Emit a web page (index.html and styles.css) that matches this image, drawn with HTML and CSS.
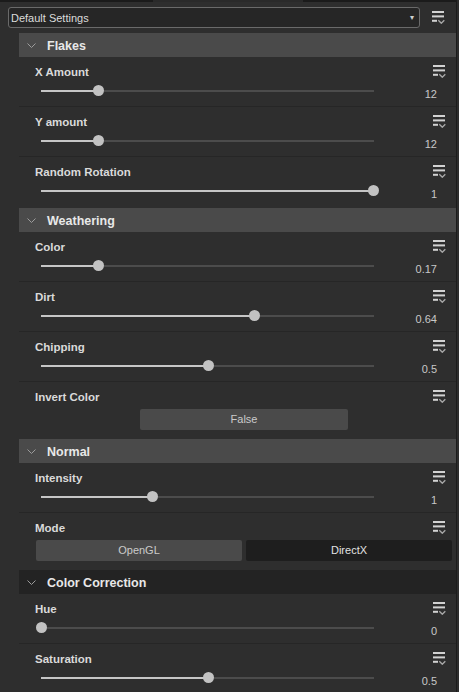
FILE: index.html
```html
<!DOCTYPE html>
<html>
<head>
<meta charset="utf-8">
<link rel="stylesheet" href="styles.css">
</head>
<body>
<div class="panel">
  <div class="topstrip"><span class="ts-dark"></span><span class="ts-mid"></span><span class="ts-dark"></span></div>
  <div class="topbar">
    <div class="dropdown"><span>Default Settings</span><span class="caret">&#9662;</span></div>
    <svg class="menu-icon" viewBox="0 0 13 13"><rect x="0" y="0" width="12" height="2"/><rect x="0" y="4.4" width="12" height="2"/><rect x="0" y="8.8" width="5" height="2"/><path class="chev" d="M6.3 9.3L9.3 12.2L12.3 9.3"/></svg>
  </div>

  <div class="section">
    <div class="header"><svg class="hchev" viewBox="0 0 9 5"><path d="M0.5 0.5L4.5 4.5L8.5 0.5"/></svg><span>Flakes</span></div>
    <div class="row">
      <div class="row-head"><span class="label">X Amount</span><svg class="menu-icon" viewBox="0 0 13 13"><rect x="0" y="0" width="12" height="2"/><rect x="0" y="4.4" width="12" height="2"/><rect x="0" y="8.8" width="5" height="2"/><path class="chev" d="M6.3 9.3L9.3 12.2L12.3 9.3"/></svg></div>
      <div class="row-body"><div class="slider" style="--p:17.1%"><div class="track"></div><div class="fill"></div><div class="thumb"></div></div><span class="value">12</span></div>
    </div>
    <div class="row">
      <div class="row-head"><span class="label">Y amount</span><svg class="menu-icon" viewBox="0 0 13 13"><rect x="0" y="0" width="12" height="2"/><rect x="0" y="4.4" width="12" height="2"/><rect x="0" y="8.8" width="5" height="2"/><path class="chev" d="M6.3 9.3L9.3 12.2L12.3 9.3"/></svg></div>
      <div class="row-body"><div class="slider" style="--p:17.1%"><div class="track"></div><div class="fill"></div><div class="thumb"></div></div><span class="value">12</span></div>
    </div>
    <div class="row">
      <div class="row-head"><span class="label">Random Rotation</span><svg class="menu-icon" viewBox="0 0 13 13"><rect x="0" y="0" width="12" height="2"/><rect x="0" y="4.4" width="12" height="2"/><rect x="0" y="8.8" width="5" height="2"/><path class="chev" d="M6.3 9.3L9.3 12.2L12.3 9.3"/></svg></div>
      <div class="row-body"><div class="slider" style="--p:99.7%"><div class="track"></div><div class="fill"></div><div class="thumb"></div></div><span class="value">1</span></div>
    </div>
  </div>

  <div class="section">
    <div class="header"><svg class="hchev" viewBox="0 0 9 5"><path d="M0.5 0.5L4.5 4.5L8.5 0.5"/></svg><span>Weathering</span></div>
    <div class="row">
      <div class="row-head"><span class="label">Color</span><svg class="menu-icon" viewBox="0 0 13 13"><rect x="0" y="0" width="12" height="2"/><rect x="0" y="4.4" width="12" height="2"/><rect x="0" y="8.8" width="5" height="2"/><path class="chev" d="M6.3 9.3L9.3 12.2L12.3 9.3"/></svg></div>
      <div class="row-body"><div class="slider" style="--p:17%"><div class="track"></div><div class="fill"></div><div class="thumb"></div></div><span class="value">0.17</span></div>
    </div>
    <div class="row">
      <div class="row-head"><span class="label">Dirt</span><svg class="menu-icon" viewBox="0 0 13 13"><rect x="0" y="0" width="12" height="2"/><rect x="0" y="4.4" width="12" height="2"/><rect x="0" y="8.8" width="5" height="2"/><path class="chev" d="M6.3 9.3L9.3 12.2L12.3 9.3"/></svg></div>
      <div class="row-body"><div class="slider" style="--p:64%"><div class="track"></div><div class="fill"></div><div class="thumb"></div></div><span class="value">0.64</span></div>
    </div>
    <div class="row">
      <div class="row-head"><span class="label">Chipping</span><svg class="menu-icon" viewBox="0 0 13 13"><rect x="0" y="0" width="12" height="2"/><rect x="0" y="4.4" width="12" height="2"/><rect x="0" y="8.8" width="5" height="2"/><path class="chev" d="M6.3 9.3L9.3 12.2L12.3 9.3"/></svg></div>
      <div class="row-body"><div class="slider" style="--p:50%"><div class="track"></div><div class="fill"></div><div class="thumb"></div></div><span class="value">0.5</span></div>
    </div>
    <div class="row row-tall">
      <div class="row-head"><span class="label">Invert Color</span><svg class="menu-icon" viewBox="0 0 13 13"><rect x="0" y="0" width="12" height="2"/><rect x="0" y="4.4" width="12" height="2"/><rect x="0" y="8.8" width="5" height="2"/><path class="chev" d="M6.3 9.3L9.3 12.2L12.3 9.3"/></svg></div>
      <div class="btn-body single"><div class="btn">False</div></div>
    </div>
  </div>

  <div class="section">
    <div class="header"><svg class="hchev" viewBox="0 0 9 5"><path d="M0.5 0.5L4.5 4.5L8.5 0.5"/></svg><span>Normal</span></div>
    <div class="row">
      <div class="row-head"><span class="label">Intensity</span><svg class="menu-icon" viewBox="0 0 13 13"><rect x="0" y="0" width="12" height="2"/><rect x="0" y="4.4" width="12" height="2"/><rect x="0" y="8.8" width="5" height="2"/><path class="chev" d="M6.3 9.3L9.3 12.2L12.3 9.3"/></svg></div>
      <div class="row-body"><div class="slider" style="--p:33.3%"><div class="track"></div><div class="fill"></div><div class="thumb"></div></div><span class="value">1</span></div>
    </div>
    <div class="row row-tall">
      <div class="row-head"><span class="label">Mode</span><svg class="menu-icon" viewBox="0 0 13 13"><rect x="0" y="0" width="12" height="2"/><rect x="0" y="4.4" width="12" height="2"/><rect x="0" y="8.8" width="5" height="2"/><path class="chev" d="M6.3 9.3L9.3 12.2L12.3 9.3"/></svg></div>
      <div class="btn-body pair"><div class="btn">OpenGL</div><div class="btn btn-active">DirectX</div></div>
    </div>
  </div>

  <div class="section">
    <div class="header header-dark"><svg class="hchev" viewBox="0 0 9 5"><path d="M0.5 0.5L4.5 4.5L8.5 0.5"/></svg><span>Color Correction</span></div>
    <div class="row">
      <div class="row-head"><span class="label">Hue</span><svg class="menu-icon" viewBox="0 0 13 13"><rect x="0" y="0" width="12" height="2"/><rect x="0" y="4.4" width="12" height="2"/><rect x="0" y="8.8" width="5" height="2"/><path class="chev" d="M6.3 9.3L9.3 12.2L12.3 9.3"/></svg></div>
      <div class="row-body"><div class="slider" style="--p:0%"><div class="track"></div><div class="fill"></div><div class="thumb"></div></div><span class="value">0</span></div>
    </div>
    <div class="row">
      <div class="row-head"><span class="label">Saturation</span><svg class="menu-icon" viewBox="0 0 13 13"><rect x="0" y="0" width="12" height="2"/><rect x="0" y="4.4" width="12" height="2"/><rect x="0" y="8.8" width="5" height="2"/><path class="chev" d="M6.3 9.3L9.3 12.2L12.3 9.3"/></svg></div>
      <div class="row-body"><div class="slider" style="--p:50%"><div class="track"></div><div class="fill"></div><div class="thumb"></div></div><span class="value">0.5</span></div>
    </div>
  </div>
</div>
</body>
</html>
```

FILE: styles.css
```css
html, body {
  margin: 0;
  padding: 0;
  background: #2d2d2d;
  height: 100%;
  overflow: hidden;
}
body {
  font-family: "Liberation Sans", Arial, sans-serif;
  color: #d8d8d8;
}
.panel {
  width: 456px;
  min-height: 692px;
  border-right: 1px solid #1c1c1c;
  background: #2e2e2e;
}
.topstrip {
  display: flex;
  height: 2px;
}
.ts-dark {
  flex: 0 0 153px;
  background: #1b1b1b;
}
.ts-mid {
  flex: 1;
  background: #2a2a2a;
}
.topbar {
  height: 30px;
  display: flex;
  align-items: flex-start;
}
.dropdown {
  margin: 5px 0 0 8px;
  width: 412px;
  height: 21px;
  box-sizing: border-box;
  border: 1px solid #6a6a6a;
  border-radius: 3px;
  background: #262626;
  display: flex;
  align-items: center;
  justify-content: space-between;
  padding: 0 5px 0 2px;
  font-size: 11px;
  color: #dcdcdc;
}
.caret {
  font-size: 8px;
  color: #cfcfcf;
}
.menu-icon {
  width: 13px;
  height: 13px;
  fill: #d2d2d2;
  flex: 0 0 auto;
}
.menu-icon .chev {
  fill: none;
  stroke: #a8a8a8;
  stroke-width: 1.4;
}
.topbar .menu-icon {
  margin: 9px 0 0 12px;
}
.section {
  margin: 1px 0 0 19px;
}
.header {
  height: 24px;
  background: #4a4a4a;
  display: flex;
  align-items: center;
  padding-left: 8px;
  padding-top: 1px;
  box-sizing: border-box;
  font-size: 12.5px;
  font-weight: bold;
  color: #e8e8e8;
}
.header-dark {
  background: #232323;
}
.hchev {
  width: 9px;
  height: 5px;
  margin-right: 11px;
  fill: none;
  stroke: #9c9c9c;
  stroke-width: 1;
}
.row {
  height: 50px;
  box-sizing: border-box;
  border-bottom: 1px solid #262626;
  padding-left: 16px;
}
.row:last-child {
  border-bottom: none;
}
.row-tall {
  height: 56px;
}
.row-head {
  display: flex;
  align-items: center;
  justify-content: space-between;
  height: 15px;
  padding-top: 7px;
  padding-right: 10px;
}
.label {
  font-size: 11.5px;
  font-weight: bold;
  color: #dadada;
}
.row-body {
  display: flex;
  align-items: center;
  height: 12px;
  margin-top: 6px;
}
.slider {
  position: relative;
  margin-left: 6px;
  width: 333px;
  height: 12px;
}
.track, .fill {
  position: absolute;
  left: 0;
  top: 5px;
  height: 2px;
}
.track {
  right: 0;
  background: #4c4c4c;
}
.fill {
  width: var(--p);
  background: #c6c6c6;
}
.thumb {
  position: absolute;
  top: 0;
  left: var(--p);
  width: 11px;
  height: 11px;
  margin-left: -5px;
  border-radius: 50%;
  background: #c2c2c2;
}
.value {
  margin-left: auto;
  padding-right: 19px;
  padding-top: 5px;
  font-size: 11px;
  color: #c8c8c8;
}
.btn-body {
  display: flex;
  margin-top: 5px;
  gap: 4px;
}
.btn-body.single {
  padding-left: 105px;
}
.btn-body.pair {
  margin-left: 1px;
  padding-right: 4px;
}
.btn {
  height: 21px;
  line-height: 21px;
  text-align: center;
  background: #4a4a4a;
  border-radius: 2px;
  font-size: 11px;
  color: #cacaca;
}
.single .btn {
  width: 208px;
}
.pair .btn {
  flex: 1;
}
.btn-active {
  background: #1e1e1e;
  color: #e2e2e2;
}
```
